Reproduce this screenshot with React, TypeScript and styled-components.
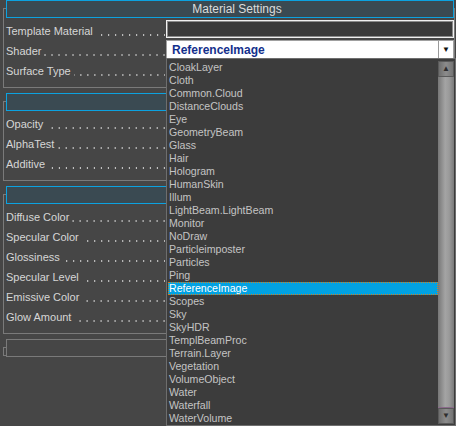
import React from "react";
import styled, { createGlobalStyle } from "styled-components";

const GlobalStyle = createGlobalStyle`
  html, body {
    margin: 0;
    padding: 0;
    background: #464646;
    font-family: "Liberation Sans", Arial, sans-serif;
    font-size: 11px;
    color: #d2d2d2;
  }
`;

const shaders = [
  "CloakLayer",
  "Cloth",
  "Common.Cloud",
  "DistanceClouds",
  "Eye",
  "GeometryBeam",
  "Glass",
  "Hair",
  "Hologram",
  "HumanSkin",
  "Illum",
  "LightBeam.LightBeam",
  "Monitor",
  "NoDraw",
  "Particleimposter",
  "Particles",
  "Ping",
  "ReferenceImage",
  "Scopes",
  "Sky",
  "SkyHDR",
  "TemplBeamProc",
  "Terrain.Layer",
  "Vegetation",
  "VolumeObject",
  "Water",
  "Waterfall",
  "WaterVolume",
];
const selected = "ReferenceImage";

const Field = ({ label, children }: { label: string; children?: React.ReactNode }) => (
  <Row>
    <Label>
      <span>{label}</span>
      <Dots />
    </Label>
    {children}
  </Row>
);

function App() {
  return (
    <>
      <GlobalStyle />
      <Page>
        <Group>
          <Header>Material Settings</Header>
          <Rows>
            <Field label="Template Material">
              <TextBox />
            </Field>
            <Field label="Shader">
              <Select>
                <span>{selected}</span>
                <SelectArrow>▼</SelectArrow>
              </Select>
            </Field>
            <Field label="Surface Type" />
          </Rows>
        </Group>

        <Group>
          <Header />
          <Rows>
            {["Opacity", "AlphaTest", "Additive"].map((l) => (
              <Field key={l} label={l} />
            ))}
          </Rows>
        </Group>

        <Group>
          <Header />
          <Rows>
            {[
              "Diffuse Color",
              "Specular Color",
              "Glossiness",
              "Specular Level",
              "Emissive Color",
              "Glow Amount",
            ].map((l) => (
              <Field key={l} label={l} />
            ))}
          </Rows>
        </Group>

        <Group $collapsed>
          <Header $inactive />
        </Group>

        <DropList>
          <Items>
            {shaders.map((s) => (
              <Item key={s} $active={s === selected}>
                {s}
              </Item>
            ))}
          </Items>
          <ScrollBar>
            <ScrollButton>▲</ScrollButton>
            <ScrollThumb />
            <ScrollButton>▼</ScrollButton>
          </ScrollBar>
        </DropList>
      </Page>
    </>
  );
}

export default App;

const Page = styled.div`
  position: relative;
  width: 456px;
  height: 426px;
  padding: 0 1px 0 3px;
  box-sizing: border-box;
  overflow: hidden;
`;

const Group = styled.div<{ $collapsed?: boolean }>`
  border: 1px solid #7a7a7a;
  margin-top: 8px;
  padding-bottom: ${(p) => (p.$collapsed ? "0" : "6px")};
  height: ${(p) => (p.$collapsed ? "7px" : "auto")};
  & + & {
    margin-top: 13px;
  }
`;

const Header = styled.div<{ $inactive?: boolean }>`
  height: 16px;
  margin: -9px 0 0 2px;
  border: 1px solid ${(p) => (p.$inactive ? "#7a7a7a" : "#0ca2e0")};
  background: ${(p) => (p.$inactive ? "#464646" : "#3a4a52")};
  color: #dcdcdc;
  font-size: 12px;
  text-align: center;
  line-height: 16px;
  padding-left: 14px;
`;

const Rows = styled.div`
  display: flex;
  flex-direction: column;
  padding: 3px 0 0 2px;
`;

const Row = styled.div`
  display: flex;
  align-items: center;
  height: 20px;
`;

const Label = styled.div`
  display: flex;
  align-items: center;
  width: 160px;
  padding-right: 1px;
  box-sizing: border-box;
  white-space: nowrap;
  color: #d6d6d6;
`;

const Dots = styled.div`
  flex: 1;
  height: 12px;
  margin-left: 3px;
  background-image: linear-gradient(90deg, transparent 6px, #d4d4d4 6px);
  background-size: 7px 2px;
  background-repeat: repeat-x;
  background-position: right bottom 1px;
`;

const TextBox = styled.div`
  flex: 1;
  height: 16px;
  margin-top: -5px;
  border: 1px solid #f0f0f0;
  box-shadow: inset 0 0 0 1px #8a8a8a;
  background: #3a3a3a;
`;

const Select = styled.div`
  flex: 1;
  display: flex;
  align-items: center;
  justify-content: space-between;
  height: 18px;
  margin-top: -2px;
  padding-left: 5px;
  border: 1px solid #a0a0a0;
  background: #ffffff;
  color: #14308c;
  font-weight: bold;
  font-size: 12px;
`;

const SelectArrow = styled.span`
  width: 14px;
  height: 18px;
  border-left: 1px solid #9a9a9a;
  color: #111;
  font-size: 8px;
  font-weight: normal;
  line-height: 18px;
  text-align: center;
`;

const DropList = styled.div`
  position: absolute;
  top: 58px;
  left: 166px;
  width: 290px;
  height: 368px;
  box-sizing: border-box;
  border: 1px solid #6e6e6e;
  background: #3c3c3c;
  display: flex;
  padding: 2px 1px 1px 1px;
`;

const Items = styled.div`
  flex: 1;
  display: flex;
  flex-direction: column;
`;

const Item = styled.div<{ $active?: boolean }>`
  height: 13px;
  line-height: 13px;
  padding-left: 1px;
  box-sizing: border-box;
  font-size: 10.6px;
  color: ${(p) => (p.$active ? "#ffffff" : "#c4c4c4")};
  background: ${(p) => (p.$active ? "#02a2e2" : "transparent")};
  outline: ${(p) => (p.$active ? "1px dotted #d08020" : "none")};
  outline-offset: -1px;
  white-space: nowrap;
`;

const ScrollBar = styled.div`
  width: 16px;
  display: flex;
  flex-direction: column;
  background: linear-gradient(90deg, #777 0%, #a4a4a4 45%, #9a9a9a 70%, #7a7a7a 100%);
`;

const ScrollButton = styled.div`
  height: 16px;
  border: 1px solid #5a5a5a;
  box-sizing: border-box;
  background: linear-gradient(90deg, #6e6e6e, #8c8c8c 50%, #747474);
  color: #2e2e2e;
  font-size: 8px;
  line-height: 14px;
  text-align: center;
`;

const ScrollThumb = styled.div`
  flex: 1;
  border-bottom: 1px solid #8a6a8a;
`;
